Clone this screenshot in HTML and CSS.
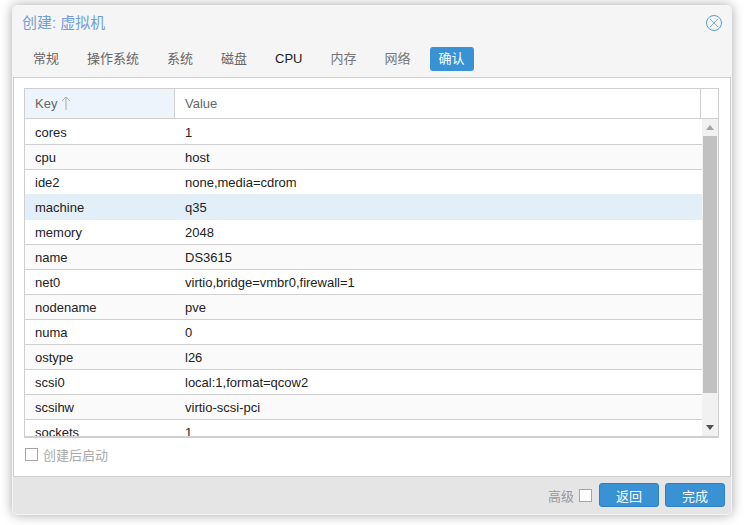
FILE: index.html
```html
<!DOCTYPE html>
<html lang="zh">
  <head>
    <meta charset="UTF-8" />
    <title>创建: 虚拟机</title>
    <link rel="stylesheet" href="styles.css">
  </head>
  <body>
    <div class="window">
      <div class="titlebar">
        <span class="title">创建: 虚拟机</span>
        <svg class="close" width="18" height="18" viewBox="0 0 18 18">
          <circle cx="9" cy="9" r="7.5" fill="none" stroke="#5b9bd5" stroke-width="1" />
          <path d="M5 5L13 13M13 5L5 13" fill="none" stroke="#5b9bd5" stroke-width="0.8" />
        </svg>
      </div>
      <div class="tabs">
        <span class="tab">常规</span>
        <span class="tab">操作系统</span>
        <span class="tab">系统</span>
        <span class="tab">磁盘</span>
        <span class="tab tab-dark">CPU</span>
        <span class="tab tab-dim">内存</span>
        <span class="tab tab-dim">网络</span>
        <span class="tab tab-active">确认</span>
      </div>
      <div class="panel">
        <div class="grid">
          <div class="grid-head">
            <div class="head-key">Key
              <svg class="sort" width="10" height="14" viewBox="0 0 10 14">
                <path d="M5 14V1M1 5L5 1L9 5" fill="none" stroke="#aaa" stroke-width="1" />
              </svg>
            </div>
            <div class="head-value">Value</div>
            <div class="head-end"></div>
          </div>
          <div class="grid-body">
            <div class="rows">
              <div class="row"><span class="key">cores</span><span>1</span></div>
              <div class="row"><span class="key">cpu</span><span>host</span></div>
              <div class="row row-before-selected"><span class="key">ide2</span><span>none,media=cdrom</span></div>
              <div class="row row-selected"><span class="key">machine</span><span>q35</span></div>
              <div class="row"><span class="key">memory</span><span>2048</span></div>
              <div class="row"><span class="key">name</span><span>DS3615</span></div>
              <div class="row"><span class="key">net0</span><span>virtio,bridge=vmbr0,firewall=1</span></div>
              <div class="row"><span class="key">nodename</span><span>pve</span></div>
              <div class="row"><span class="key">numa</span><span>0</span></div>
              <div class="row"><span class="key">ostype</span><span>l26</span></div>
              <div class="row"><span class="key">scsi0</span><span>local:1,format=qcow2</span></div>
              <div class="row"><span class="key">scsihw</span><span>virtio-scsi-pci</span></div>
              <div class="row"><span class="key">sockets</span><span>1</span></div>
            </div>
            <div class="scrollbar">
              <span class="arrow arrow-up"></span>
              <div class="track"><div class="thumb"></div></div>
              <span class="arrow arrow-down"></span>
            </div>
          </div>
        </div>
        <label class="start-after"><span class="checkbox"></span>创建后启动</label>
      </div>
      <div class="footer">
        <span class="advanced">高级</span>
        <span class="checkbox"></span>
        <button class="button">返回</button>
        <button class="button">完成</button>
      </div>
    </div>
  </body>
</html>
```

FILE: styles.css
```css
body {
  margin: 0;
  height: 525px;
  overflow: hidden;
  background: #fff;
  font-family: "Liberation Sans", "Noto Sans CJK SC", sans-serif;
  font-size: 13px;
  color: #333;
}
.window {
  width: 720px;
  height: 510px;
  margin: 5px 0 0 12px;
  display: flex;
  flex-direction: column;
  background: #f5f5f5;
  border-radius: 5px;
  box-shadow: 0 0 12px rgba(0, 0, 0, 0.35);
}
.titlebar {
  height: 42px;
  flex: none;
  display: flex;
  justify-content: space-between;
  align-items: center;
  padding: 0 9px 6px 10px;
  box-sizing: border-box;
}
.title {
  font-size: 15px;
  color: #6f9fd8;
  margin-bottom: 3px;
}
.tabs {
  height: 30px;
  flex: none;
  display: flex;
  gap: 10px;
  padding-left: 12px;
  box-sizing: border-box;
}
.tab {
  height: 24px;
  line-height: 24px;
  padding: 0 9px;
  color: #666;
  border-radius: 3px;
}
.tab-dark {
  color: #222;
}
.tab-dim {
  color: #777;
}
.tab-active {
  background: #3892d4;
  color: #fff;
}
.panel {
  flex: 1;
  margin: 0 1px;
  background: #fff;
  border: 1px solid #cfcfcf;
  padding: 10px 11px 0 10px;
  box-sizing: border-box;
}
.grid {
  height: 350px;
  display: flex;
  flex-direction: column;
  border: 1px solid #cfcfcf;
  border-bottom-width: 2px;
  box-sizing: border-box;
}
.grid-head {
  height: 30px;
  flex: none;
  display: flex;
  border-bottom: 1px solid #cfcfcf;
  box-sizing: border-box;
  line-height: 29px;
  color: #666;
}
.head-key {
  width: 150px;
  padding-left: 10px;
  box-sizing: border-box;
  background: #edf4fb;
  border-right: 1px solid #cfcfcf;
}
.sort {
  vertical-align: -2px;
}
.head-value {
  flex: 1;
  padding-left: 10px;
}
.head-end {
  width: 17px;
  border-left: 1px solid #cfcfcf;
}
.grid-body {
  flex: 1;
  display: flex;
  min-height: 0;
}
.rows {
  flex: 1;
  overflow: hidden;
  padding-top: 1px;
}
.row {
  height: 25px;
  line-height: 26px;
  display: flex;
  padding-left: 10px;
  box-sizing: border-box;
  border-bottom: 1px solid #cfcfcf;
  color: #222;
}
.row:nth-child(even) {
  background: #fafafa;
}
.key {
  width: 150px;
  flex: none;
}
.row-before-selected {
  border-bottom-color: #e2eef8;
}
.row.row-selected {
  background: #e2eef8;
  border-bottom-color: #e2eef8;
}
.scrollbar {
  width: 16px;
  flex: none;
  display: flex;
  flex-direction: column;
  align-items: center;
  background: #f1f1f1;
}
.track {
  flex: 1;
  width: 100%;
  padding: 0 1px 26px;
  box-sizing: border-box;
}
.thumb {
  height: 100%;
  background: #c1c1c1;
}
.arrow {
  flex: none;
  width: 0;
  height: 0;
  margin: 6px 0;
  border-left: 4px solid transparent;
  border-right: 4px solid transparent;
}
.arrow-up {
  border-bottom: 5px solid #a3a3a3;
}
.arrow-down {
  border-top: 5px solid #505050;
}
.start-after {
  display: flex;
  align-items: center;
  gap: 5px;
  margin: 7px 0 0 1px;
  color: #aaa;
}
.checkbox {
  display: inline-block;
  width: 13px;
  height: 13px;
  flex: none;
  background: #fff;
  border: 1px solid #a5a5a5;
  box-sizing: border-box;
}
.footer {
  height: 37px;
  flex: none;
  margin: 0 1px 1px;
  display: flex;
  align-items: center;
  justify-content: flex-end;
  padding: 0 6px 1px 0;
  box-sizing: border-box;
  background: #e5e5e5;
  border-radius: 0 0 4px 4px;
}
.advanced {
  color: #999;
  margin-right: 5px;
}
.button {
  width: 60px;
  height: 24px;
  margin-left: 6px;
  padding: 0;
  border: 1px solid #2f7fc4;
  border-radius: 3px;
  background: #3892d4;
  color: #fff;
  font: inherit;
}
.checkbox + .button {
  margin-left: 7px;
}
```
